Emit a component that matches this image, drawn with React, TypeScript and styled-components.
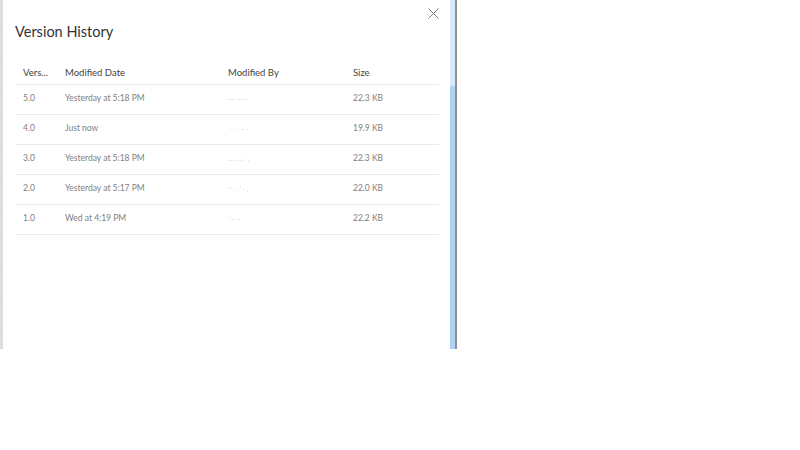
import React from "react";
import styled, { createGlobalStyle } from "styled-components";

const Global = createGlobalStyle`
  html, body { margin: 0; padding: 0; background: #ffffff; }
  body { font-family: Lato, "Open Sans", "Liberation Sans", sans-serif; }
`;

const Screen = styled.div`
  display: flex;
  align-items: flex-start;
  width: 800px;
  height: 450px;
  background: #ffffff;
`;

const LeftStrip = styled.div`
  width: 3px;
  height: 349px;
  background: repeating-linear-gradient(
    to bottom,
    #dddddd 0px,
    #dddddd 29px,
    #d5d5d5 29px,
    #d5d5d5 30px
  );
`;

const Panel = styled.div`
  position: relative;
  width: 447px;
  height: 349px;
  background: #ffffff;
  box-sizing: border-box;
  padding: 0 11px 0 12px;
  display: flex;
  flex-direction: column;
`;

const Title = styled.h1`
  margin: 22px 0 0 0;
  font-size: 14.5px;
  font-weight: 400;
  color: #333333;
  line-height: 20px;
`;

const CloseButton = styled.button`
  position: absolute;
  top: 7px;
  right: 11px;
  width: 12px;
  height: 12px;
  padding: 0;
  border: none;
  background: transparent;
  display: flex;
  align-items: center;
  justify-content: center;
`;

const Table = styled.div`
  margin-top: 19px;
  width: 424px;
  display: flex;
  flex-direction: column;
`;

const Row = styled.div<{ $header?: boolean }>`
  display: grid;
  grid-template-columns: 42px 163px 125px 1fr;
  align-items: center;
  box-sizing: border-box;
  height: ${(p) => (p.$header ? "24px" : "30px")};
  padding-bottom: ${(p) => (p.$header ? "0" : "3px")};
  border-bottom: 1px solid #ebebeb;
`;

const Cell = styled.div<{ $header?: boolean }>`
  padding-left: 8px;
  font-size: ${(p) => (p.$header ? "9.5px" : "8.5px")};
  color: ${(p) => (p.$header ? "#444444" : "#808080")};
  white-space: nowrap;
  overflow: hidden;
`;

const Blurred = styled.span`
  font-size: 5px;
  color: #c4c4c4;
  letter-spacing: 0.5px;
  filter: blur(0.3px);
`;

const ScrollTrack = styled.div`
  width: 5px;
  height: 349px;
  display: flex;
  flex-direction: column;
  background: #d6e8fb;
`;

const ScrollThumb = styled.div`
  margin-top: 86px;
  flex: 1;
  background: #b0d2f5;
`;

const EdgeLine = styled.div`
  width: 2px;
  height: 349px;
  background: #8f8f8f;
`;

const rows = [
  { v: "5.0", d: "Yesterday at 5:18 PM", b: "···· ······", s: "22.3 KB" },
  { v: "4.0", d: "Just now", b: "' ·  ,  ' ··  ·", s: "19.9 KB" },
  { v: "3.0", d: "Yesterday at 5:18 PM", b: "........,   ' ,", s: "22.3 KB" },
  { v: "2.0", d: "Yesterday at 5:17 PM", b: "' '·  ,   ' · ,", s: "22.0 KB" },
  { v: "1.0", d: "Wed at 4:19 PM", b: "' ··            ··", s: "22.2 KB" },
];

export default function App() {
  return (
    <>
      <Global />
      <Screen>
        <LeftStrip />
        <Panel>
          <CloseButton aria-label="Close">
            <svg width="11" height="11" viewBox="0 0 11 11">
              <path d="M0.5 0.5 L10.5 10.5 M10.5 0.5 L0.5 10.5" stroke="#7a7a7a" strokeWidth="1" fill="none" />
            </svg>
          </CloseButton>
          <Title>Version History</Title>
          <Table>
            <Row $header>
              <Cell $header>Vers...</Cell>
              <Cell $header>Modified Date</Cell>
              <Cell $header>Modified By</Cell>
              <Cell $header>Size</Cell>
            </Row>
            {rows.map((r) => (
              <Row key={r.v}>
                <Cell>{r.v}</Cell>
                <Cell>{r.d}</Cell>
                <Cell>
                  <Blurred>{r.b}</Blurred>
                </Cell>
                <Cell>{r.s}</Cell>
              </Row>
            ))}
          </Table>
        </Panel>
        <ScrollTrack>
          <ScrollThumb />
        </ScrollTrack>
        <EdgeLine />
      </Screen>
    </>
  );
}
